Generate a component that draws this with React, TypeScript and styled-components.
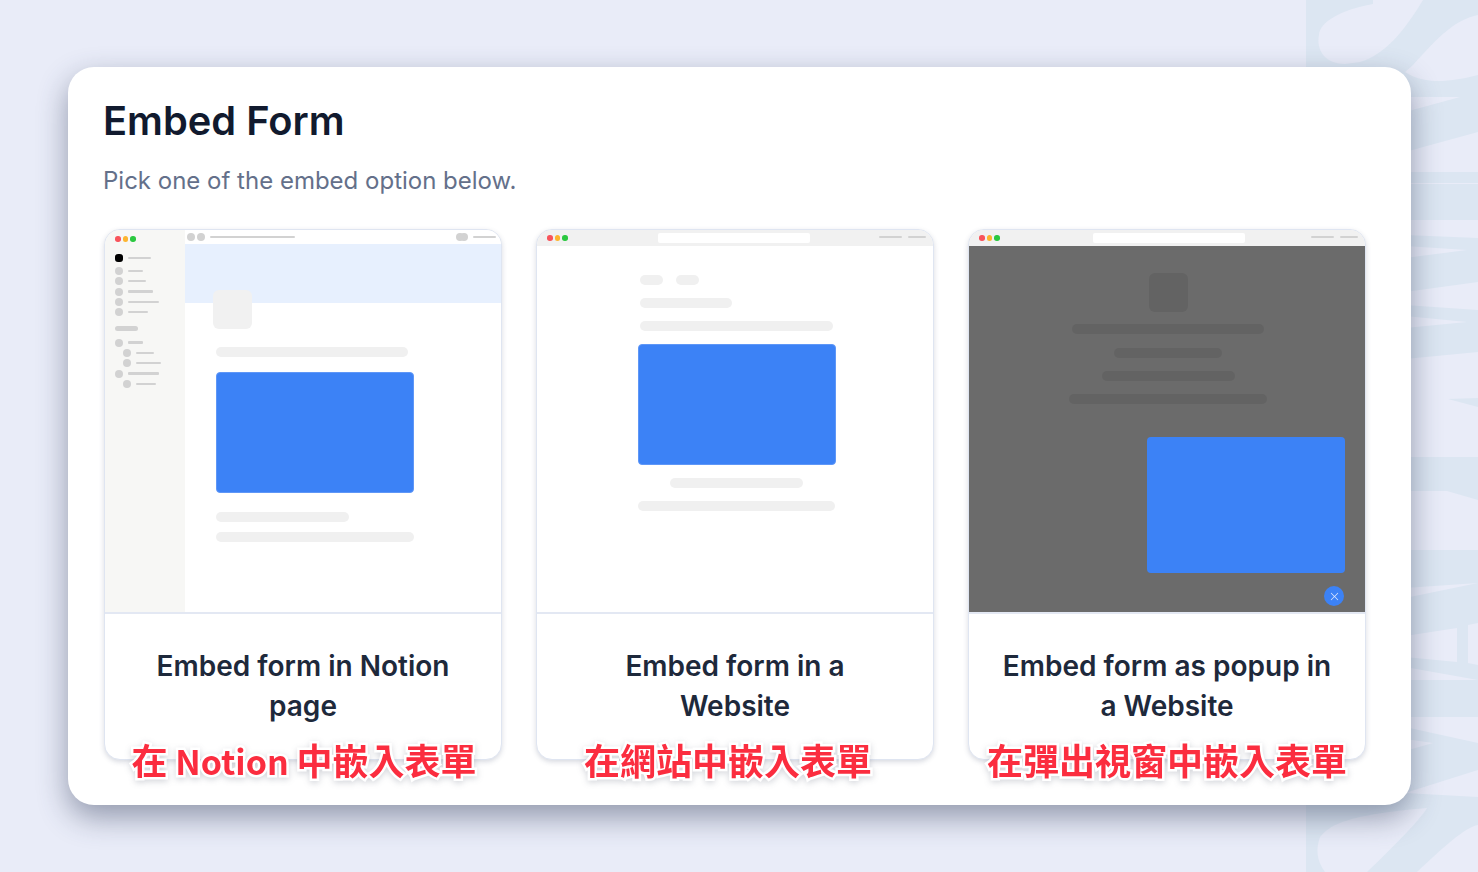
import React from "react";
import styled, { createGlobalStyle } from "styled-components";
import { HiXMark } from "react-icons/hi2";

const GlobalStyle = createGlobalStyle`
  html, body {
    margin: 0;
    padding: 0;
    background: #e9ecf8;
  }
  * { box-sizing: border-box; }
`;

// light shapes cut out of the blue column on the right
const cutouts = [
  "M1319 35C1320 22 1340 10 1373 4V0H1423C1405 30 1385 55 1360 62L1345 64C1325 64 1316 50 1319 35Z",
  "M1478 15C1455 20 1440 35 1413 65L1405 72C1425 85 1450 82 1478 75Z",
  "M1405 97H1460L1405 112Z",
  "M1405 152L1478 132V172H1405Z",
  "M1405 183H1478V184H1405Z",
  "M1405 220H1478V238L1405 235Z",
  "M1405 246L1467 250L1405 258Z",
  "M1405 292L1478 282V310L1405 305Z",
  "M1405 316L1467 322L1405 328Z",
  "M1405 359L1478 352V398L1448 399L1478 407V457H1405Z",
  "M1405 491H1447L1478 500V550H1405Z",
  "M1405 588L1478 583L1405 598Z",
  "M1405 636L1457 628V662L1405 657Z",
  "M1468 625L1478 623V665L1468 663Z",
  "M1405 667L1478 680H1405Z",
  "M1405 717H1478V743L1405 727Z",
  "M1405 739L1433 743L1405 751Z",
  "M1405 793L1478 770V797Z",
  "M1320 837C1330 825 1345 815 1427 808C1420 820 1390 850 1367 872H1325C1316 860 1316 848 1320 837Z",
  "M1478 825C1465 827 1440 850 1417 872H1478Z",
];

const Backdrop = () => (
  <BackdropSvg viewBox="0 0 1478 872" aria-hidden>
    <path d="M1306 0H1478V872H1306Z" fill="#dce6f2" />
    {cutouts.map((d) => (
      <path key={d} d={d} fill="#e9ecf8" />
    ))}
  </BackdropSvg>
);

const TrafficLights = () => (
  <Lights>
    <Light $color="#f8545c" />
    <Light $color="#fdb52f" />
    <Light $color="#2bc840" />
  </Lights>
);

const BrowserBar = ({ urlShift }: { urlShift: number }) => (
  <BarFrame>
    <TrafficLights />
    <UrlBox $shift={urlShift} />
    <BarLines>
      <Line $w={23} />
      <Line $w={18} />
    </BarLines>
  </BarFrame>
);

const navItems = [
  { w: 15, indent: 0 },
  { w: 18, indent: 0 },
  { w: 25, indent: 0 },
  { w: 31, indent: 0 },
  { w: 20, indent: 0 },
];

const subItems = [
  { w: 15, indent: 0 },
  { w: 18, indent: 8 },
  { w: 25, indent: 8 },
  { w: 31, indent: 0 },
  { w: 20, indent: 8 },
];

const NotionPreview = () => (
  <NotionFrame>
    <Sidebar>
      <TrafficLights />
      <NavHead>
        <NavDot $square />
        <Line $w={23} />
      </NavHead>
      <NavGroup>
        {navItems.map((item) => (
          <NavRow key={item.w} $indent={item.indent}>
            <NavDot />
            <Line $w={item.w} />
          </NavRow>
        ))}
      </NavGroup>
      <NavLabel />
      <NavGroup>
        {subItems.map((item) => (
          <NavRow key={item.w} $indent={item.indent}>
            <NavDot />
            <Line $w={item.w} />
          </NavRow>
        ))}
      </NavGroup>
    </Sidebar>
    <NotionMain>
      <NotionTop>
        <TopDots>
          <TopDot />
          <TopDot />
        </TopDots>
        <Line $w={85} />
        <TopRight>
          <Avatars>
            <TopDot />
            <TopDot />
          </Avatars>
          <Line $w={23} />
        </TopRight>
      </NotionTop>
      <Banner />
      <NotionBody>
        <PageIcon />
        <Skeleton $w={192} $mt={18} $ml={3} />
        <BlueBlock $h={121} $mt={15} $ml={3} />
        <Skeleton $w={133} $mt={19} $ml={3} />
        <Skeleton $w={198} $mt={10} $ml={3} />
      </NotionBody>
    </NotionMain>
  </NotionFrame>
);

const WebsitePreview = () => (
  <PreviewColumn>
    <BrowserBar urlShift={-5} />
    <WebsiteBody>
      <PillRow>
        <Skeleton $w={23} />
        <Skeleton $w={23} />
      </PillRow>
      <Skeleton $w={92} $mt={13} />
      <Skeleton $w={193} $mt={13} />
      <BlueBlock $h={121} $mt={13} $ml={-2} />
      <Skeleton $w={133} $mt={13} $ml={30} />
      <Skeleton $w={197} $mt={13} $ml={-2} />
    </WebsiteBody>
  </PreviewColumn>
);

const PopupPreview = () => (
  <PreviewColumn>
    <BrowserBar urlShift={0} />
    <PopupBody>
      <DimIcon />
      <DimBar $w={192} $mt={12} />
      <DimBar $w={108} $mt={14} />
      <DimBar $w={133} $mt={13} />
      <DimBar $w={198} $mt={13} />
      <PopupBlock />
      <CloseBubble>
        <HiXMark size={13} color="#dbe7fe" />
      </CloseBubble>
    </PopupBody>
  </PreviewColumn>
);

const NotionNote = () => (
  <>
    在<LatinWord> Notion </LatinWord>中嵌入表單
  </>
);

const options = [
  {
    title: "Embed form in Notion page",
    note: <NotionNote />,
    preview: <NotionPreview />,
    noteShift: 1,
  },
  {
    title: "Embed form in a Website",
    note: "在網站中嵌入表單",
    preview: <WebsitePreview />,
    noteShift: -7,
  },
  {
    title: "Embed form as popup in a Website",
    note: "在彈出視窗中嵌入表單",
    preview: <PopupPreview />,
    noteShift: 0,
  },
];

export default function App() {
  return (
    <Page>
      <GlobalStyle />
      <Backdrop />
      <Modal>
        <Title>Embed Form</Title>
        <Subtitle>Pick one of the embed option below.</Subtitle>
        <Options>
          {options.map((opt) => (
            <OptionSlot key={opt.title}>
              <Card>
                <PreviewArea>{opt.preview}</PreviewArea>
                <CardLabel>{opt.title}</CardLabel>
              </Card>
              <Note $shift={opt.noteShift}>{opt.note}</Note>
            </OptionSlot>
          ))}
        </Options>
      </Modal>
    </Page>
  );
}

const Page = styled.div`
  position: relative;
  width: 1478px;
  height: 872px;
  overflow: hidden;
  padding: 67px 67px 67px 68px;
  background: #e9ecf8;
  font-family: Inter, "Liberation Sans", sans-serif;
`;

const BackdropSvg = styled.svg`
  position: absolute;
  inset: 0;
  width: 1478px;
  height: 872px;
`;

const Modal = styled.div`
  position: relative;
  height: 738px;
  padding: 29px 45px 0 36px;
  background: #fff;
  border-radius: 26px;
  box-shadow: 0 12px 30px rgba(50, 60, 90, 0.48);
`;

const Title = styled.h1`
  margin: 0 0 0 -1px;
  font-size: 39.8px;
  line-height: 50px;
  font-weight: 600;
  color: #111a2e;
`;

const Subtitle = styled.p`
  margin: 20px 0 0 -1px;
  font-size: 24px;
  line-height: 30px;
  font-weight: 400;
  color: #64708a;
`;

const Options = styled.div`
  display: grid;
  grid-template-columns: repeat(3, 398px);
  column-gap: 34px;
  margin-top: 33px;
`;

const OptionSlot = styled.div`
  position: relative;
`;

const Card = styled.div`
  height: 531px;
  background: #fff;
  border: 1px solid #dfe5f1;
  border-radius: 16px;
  overflow: hidden;
  box-shadow: 0 2px 5px rgba(90, 100, 130, 0.24);
`;

const PreviewArea = styled.div`
  height: 383.5px;
  border-bottom: 2px solid #e3e8f3;
  overflow: hidden;
`;

const CardLabel = styled.div`
  padding: 32.5px 31px 0;
  text-align: center;
  font-size: 28px;
  line-height: 40px;
  font-weight: 600;
  color: #1e293b;
`;

const Note = styled.div<{ $shift: number }>`
  position: absolute;
  left: ${({ $shift }) => $shift}px;
  right: ${({ $shift }) => -$shift}px;
  top: 507px;
  text-align: center;
  white-space: pre;
  font-family: "Noto Sans CJK TC", Inter, sans-serif;
  font-size: 36px;
  line-height: 46px;
  font-weight: 700;
  color: #fb2d3f;
  -webkit-text-stroke: 5px #fff;
  paint-order: stroke fill;
  filter: drop-shadow(0 2px 3px rgba(60, 70, 90, 0.22));
`;

const LatinWord = styled.span`
  font-size: 34px;
`;

const NotionFrame = styled.div`
  display: flex;
  height: 100%;
`;

const PreviewColumn = styled.div`
  display: flex;
  flex-direction: column;
  height: 100%;
`;

const Lights = styled.div`
  display: flex;
  gap: 2.2px;
`;

const Light = styled.span<{ $color: string }>`
  width: 5.5px;
  height: 5.5px;
  border-radius: 50%;
  background: ${({ $color }) => $color};
`;

const BarFrame = styled.div`
  flex: none;
  display: grid;
  grid-template-columns: 1fr auto 1fr;
  align-items: center;
  height: 16px;
  padding: 0 7px 0 10px;
  background: #f1f1f1;
`;

const UrlBox = styled.div<{ $shift: number }>`
  width: 152px;
  height: 10px;
  margin-left: ${({ $shift }) => $shift}px;
  border-radius: 2px;
  background: #fff;
`;

const BarLines = styled.div`
  display: flex;
  justify-content: flex-end;
  gap: 6px;
  margin-bottom: 2px;
`;

const Line = styled.span<{ $w: number }>`
  display: block;
  width: ${({ $w }) => $w}px;
  height: 2.4px;
  border-radius: 1px;
  background: #d2d2d2;
`;

const Sidebar = styled.div`
  flex: none;
  width: 80px;
  padding: 6px 0 0 10px;
  background: #f7f7f5;
`;

const NavHead = styled.div`
  display: flex;
  align-items: center;
  gap: 5px;
  margin-top: 12.5px;
`;

const NavGroup = styled.div`
  display: flex;
  flex-direction: column;
  gap: 2.3px;
  margin-top: 5px;
`;

const NavRow = styled.div<{ $indent: number }>`
  display: flex;
  align-items: center;
  gap: 5px;
  padding-left: ${({ $indent }) => $indent}px;
`;

const NavDot = styled.span<{ $square?: boolean }>`
  width: 8px;
  height: 8px;
  border-radius: ${({ $square }) => ($square ? "3px" : "50%")};
  background: ${({ $square }) => ($square ? "#000" : "#d2d2d2")};
`;

const NavLabel = styled.div`
  width: 23px;
  height: 5px;
  margin: 10px 0 7.5px;
  border-radius: 3px;
  background: #d2d2d2;
`;

const NotionMain = styled.div`
  flex: 1;
  min-width: 0;
`;

const NotionTop = styled.div`
  display: flex;
  align-items: center;
  gap: 5px;
  height: 14px;
  padding: 0 5px 0 2px;
  background: #fff;
`;

const TopDots = styled.div`
  display: flex;
  gap: 2.3px;
`;

const TopDot = styled.span`
  width: 8px;
  height: 8px;
  border-radius: 50%;
  background: #d2d2d2;
`;

const TopRight = styled.div`
  display: flex;
  align-items: center;
  gap: 5.5px;
  margin-left: auto;
`;

const Avatars = styled.div`
  display: flex;
  & > span + span {
    margin-left: -4px;
  }
`;

const Banner = styled.div`
  height: 59px;
  background: #e7f0fe;
`;

const NotionBody = styled.div`
  padding-left: 28px;
`;

const PageIcon = styled.div`
  width: 39px;
  height: 39px;
  margin-top: -13px;
  border-radius: 6px;
  background: #f1f1f1;
`;

const Skeleton = styled.div<{ $w: number; $mt?: number; $ml?: number }>`
  width: ${({ $w }) => $w}px;
  height: 10px;
  margin-top: ${({ $mt }) => $mt ?? 0}px;
  margin-left: ${({ $ml }) => $ml ?? 0}px;
  border-radius: 5px;
  background: #f0f0f0;
`;

const BlueBlock = styled.div<{ $h: number; $mt: number; $ml?: number }>`
  width: 198px;
  height: ${({ $h }) => $h}px;
  margin-top: ${({ $mt }) => $mt}px;
  margin-left: ${({ $ml }) => $ml ?? 0}px;
  border: 1px solid #5f97f7;
  border-radius: 4px;
  background: #3c82f6;
`;

const WebsiteBody = styled.div`
  padding: 29px 0 0 103px;
`;

const PillRow = styled.div`
  display: flex;
  gap: 13px;
`;

const PopupBody = styled.div`
  position: relative;
  flex: 1;
  display: flex;
  flex-direction: column;
  align-items: center;
  padding: 27px 0 0 2px;
  background: #6b6b6b;
`;

const DimIcon = styled.div`
  width: 39px;
  height: 39px;
  border-radius: 6px;
  background: #636363;
`;

const DimBar = styled.div<{ $w: number; $mt: number }>`
  width: ${({ $w }) => $w}px;
  height: 10px;
  margin-top: ${({ $mt }) => $mt}px;
  border-radius: 5px;
  background: #636363;
`;

const PopupBlock = styled.div`
  position: absolute;
  top: 191px;
  right: 20px;
  width: 198px;
  height: 136px;
  border-radius: 4px;
  background: #3c82f6;
`;

const CloseBubble = styled.div`
  position: absolute;
  top: 340px;
  right: 21px;
  width: 20px;
  height: 20px;
  display: flex;
  align-items: center;
  justify-content: center;
  border-radius: 50%;
  background: #3c82f6;
`;
